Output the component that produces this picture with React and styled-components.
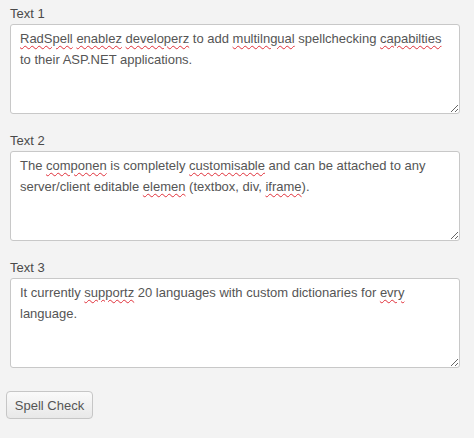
import styled, { createGlobalStyle } from "styled-components";

const GlobalStyle = createGlobalStyle`
  html, body {
    margin: 0;
    padding: 0;
    background: #f3f3f3;
  }
  body {
    font-family: "Liberation Sans", Arial, sans-serif;
  }
`;

const Page = styled.div`
  width: 474px;
  height: 438px;
  box-sizing: border-box;
  padding: 4px 0 0 6px;
  background: #f3f3f3;
`;

const Field = styled.div`
  margin: 0 14px 17px 4px;
`;

const Label = styled.div`
  font-size: 13px;
  line-height: 20px;
  color: #4a4a4a;
`;

const Editor = styled.div`
  box-sizing: border-box;
  height: 90px;
  padding: 3px 9px;
  background: #fff;
  border: 1px solid #c8c8c8;
  border-radius: 3px;
  font-size: 13px;
  line-height: 21px;
  color: #555;
  overflow: auto;
  resize: vertical;
`;

const Miss = styled.span`
  text-decoration: underline wavy #e0303a;
  text-decoration-thickness: 1px;
  text-underline-offset: 2px;
`;

const Button = styled.button`
  margin-top: 6px;
  height: 28px;
  width: 87px;
  padding: 0;
  font-family: "Liberation Sans", Arial, sans-serif;
  font-size: 13px;
  color: #555;
  background: linear-gradient(#fafafa, #e8e8e8);
  border: 1px solid #c6c6c6;
  border-radius: 4px;
`;

const texts = [
  {
    label: "Text 1",
    content: (
      <>
        <Miss>RadSpell</Miss> <Miss>enablez</Miss> <Miss>developerz</Miss> to add{" "}
        <Miss>multilngual</Miss> spellchecking <Miss>capabilties</Miss> to their
        ASP.NET applications.
      </>
    ),
  },
  {
    label: "Text 2",
    content: (
      <>
        The <Miss>componen</Miss> is completely <Miss>customisable</Miss> and can be
        attached to any server/client editable <Miss>elemen</Miss> (textbox, div,{" "}
        <Miss>iframe</Miss>).
      </>
    ),
  },
  {
    label: "Text 3",
    content: (
      <>
        It currently <Miss>supportz</Miss> 20 languages with custom dictionaries for{" "}
        <Miss>evry</Miss> language.
      </>
    ),
  },
];

const App = () => {
  return (
    <Page>
      <GlobalStyle />
      {texts.map((t) => (
        <Field key={t.label}>
          <Label>{t.label}</Label>
          <Editor>{t.content}</Editor>
        </Field>
      ))}
      <Button>Spell Check</Button>
    </Page>
  );
};

export default App;
